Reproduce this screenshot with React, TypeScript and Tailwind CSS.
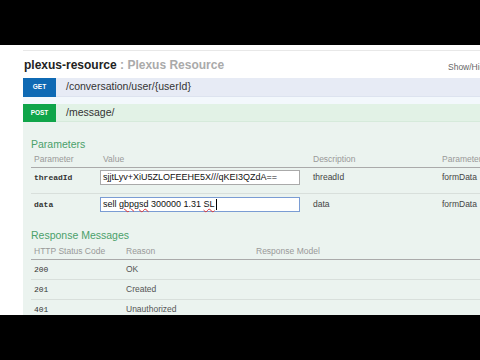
import React from "react";

const sans = { fontFamily: '"Liberation Sans", Arial, sans-serif' };
const mono = { fontFamily: '"Liberation Mono", monospace' };

export default function App() {
  return (
    <div className="w-[480px] h-[360px] bg-black overflow-hidden flex flex-col" style={sans}>
      <div className="h-[45px] shrink-0 bg-black" />
      <div className="h-[270px] shrink-0 bg-white flex flex-col pl-[23px] overflow-hidden">
        <div className="h-[6px] shrink-0 border-b border-[#e8e8e8]" />
        <div className="h-[27px] shrink-0 flex items-center justify-between overflow-hidden">
          <div className="text-[12px] font-bold pl-[1px] leading-none whitespace-nowrap">
            <span className="text-[#222]">plexus-resource</span>
            <span className="text-[#aaa]"> : Plexus Resource</span>
          </div>
          <div className="text-[8.5px] text-[#666] w-[32px] shrink-0 overflow-hidden whitespace-nowrap mt-[5px]">Show/Hide</div>
        </div>
        <div className="h-[19px] shrink-0 flex items-center bg-[#e7ebf5] border-b border-[#dde3ef]">
          <div className="w-[33px] h-[19px] bg-[#0f6ab4] text-white text-[6.5px] font-bold flex items-center justify-center">GET</div>
          <div className="ml-[10px] text-[10.5px] text-[#333]">/conversation/user/{"{userId}"}</div>
        </div>
        <div className="h-[7px] shrink-0 bg-[#f3f8fc]" />
        <div className="h-[18px] shrink-0 flex items-center bg-[#e2f2e6] border-b border-[#d6eadb]">
          <div className="w-[33px] h-[18px] bg-[#10a54a] text-white text-[6.5px] font-bold flex items-center justify-center">POST</div>
          <div className="ml-[10px] text-[10.5px] text-[#333]">/message/</div>
        </div>
        <div className="flex-1 bg-[#ebf3ef] pl-[8px] flex flex-col">
          <div className="mt-[17px] h-[11px] shrink-0 text-[10.5px] text-[#4aa06a] leading-none">Parameters</div>
          <div className="mt-[1px] h-[17px] shrink-0 flex items-center text-[8.5px] text-[#999] border-b border-[#aaa]">
            <div className="w-[69px] shrink-0 pl-[3px]">Parameter</div>
            <div className="w-[210px] shrink-0 pl-[3px]">Value</div>
            <div className="w-[129px] shrink-0 pl-[3px]">Description</div>
            <div className="pl-[3px] whitespace-nowrap">Parameter Type</div>
          </div>
          <div className="h-[26px] shrink-0 flex items-start pt-[2px] text-[8.5px] border-b border-[#d8dfdb]">
            <div className="w-[69px] shrink-0 h-[15px] flex items-center pl-[3px] font-bold text-[8px] text-[#333]" style={mono}>threadId</div>
            <div className="w-[210px] shrink-0">
              <div className="w-[200px] h-[15px] bg-white border border-[#aaa] flex items-center px-[2px] text-[9px] text-[#111] overflow-hidden whitespace-nowrap">sjjtLyv+XiU5ZLOFEEHE5X///qKEI3QZdA==</div>
            </div>
            <div className="w-[129px] shrink-0 h-[15px] flex items-center pl-[3px] text-[#444]">threadId</div>
            <div className="h-[15px] flex items-center pl-[3px] text-[#444] whitespace-nowrap">formData</div>
          </div>
          <div className="h-[26px] shrink-0 flex items-start pt-[3px] text-[8.5px]">
            <div className="w-[69px] shrink-0 h-[15px] flex items-center pl-[3px] font-bold text-[8px] text-[#333]" style={mono}>data</div>
            <div className="w-[210px] shrink-0">
              <div className="w-[200px] h-[15px] bg-white border border-[#7a9cd3] flex items-center px-[2px] text-[9px] text-[#111] whitespace-nowrap">
                <span>sell&nbsp;</span>
                <span className="underline decoration-wavy decoration-[#d33]">gbpgsd</span>
                <span>&nbsp;300000 1.31&nbsp;</span>
                <span className="underline decoration-wavy decoration-[#d33]">SL</span>
                <span className="w-[1px] h-[11px] bg-black ml-[1px]" />
              </div>
            </div>
            <div className="w-[129px] shrink-0 h-[15px] flex items-center pl-[3px] text-[#444]">data</div>
            <div className="h-[15px] flex items-center pl-[3px] text-[#444] whitespace-nowrap">formData</div>
          </div>
          <div className="mt-[10px] h-[11px] shrink-0 text-[10.5px] text-[#4aa06a] leading-none">Response Messages</div>
          <div className="mt-[3px] h-[16px] shrink-0 flex items-center text-[8.5px] text-[#999] border-b border-[#aaa]">
            <div className="w-[92px] shrink-0 pl-[3px]">HTTP Status Code</div>
            <div className="w-[130px] shrink-0 pl-[3px]">Reason</div>
            <div className="pl-[3px]">Response Model</div>
          </div>
          {[
            ["200", "OK"],
            ["201", "Created"],
            ["401", "Unauthorized"],
          ].map(([c, r]) => (
            <div key={c} className="h-[20px] shrink-0 flex items-center text-[8.5px] border-b border-[#d8dfdb]">
              <div className="w-[92px] shrink-0 pl-[3px] text-[8px] text-[#333]" style={mono}>{c}</div>
              <div className="w-[130px] shrink-0 pl-[3px] text-[#555]">{r}</div>
              <div />
            </div>
          ))}
        </div>
      </div>
      <div className="flex-1 bg-black" />
    </div>
  );
}
